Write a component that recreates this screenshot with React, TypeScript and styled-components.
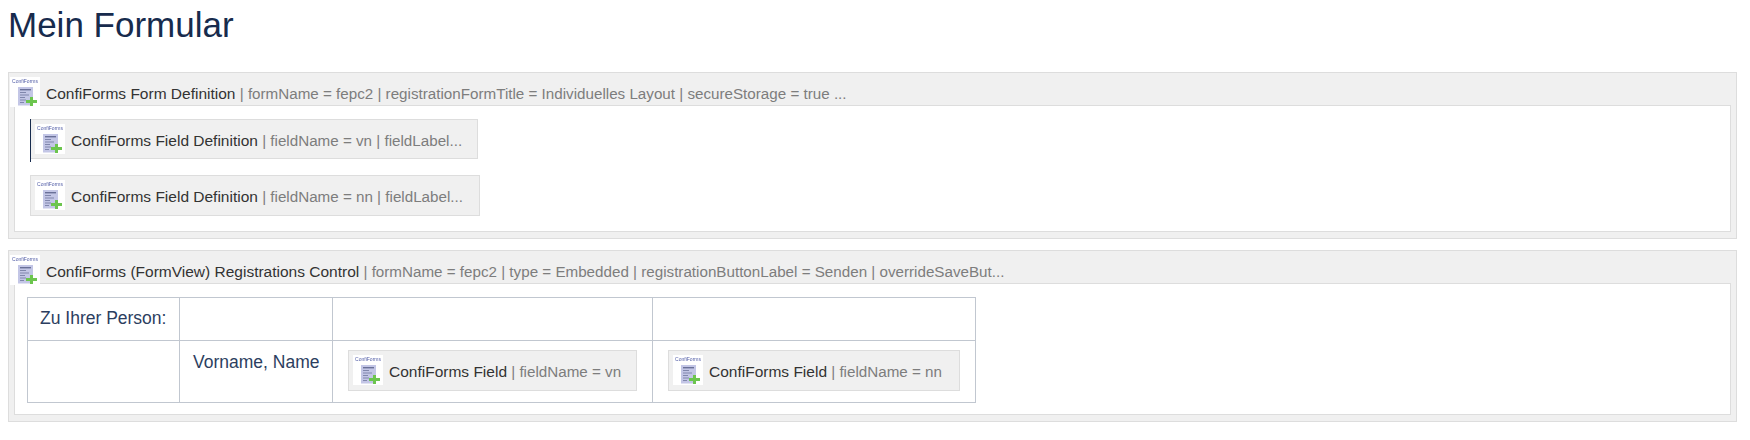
import React from 'react';
import styled, { createGlobalStyle } from 'styled-components';

const GlobalStyle = createGlobalStyle`
  html, body {
    margin: 0;
    padding: 0;
    background: #fff;
    font-family: 'Liberation Sans', Arial, sans-serif;
  }
`;

const Page = styled.div`
  padding: 0 13px 0 8px;
`;

const Title = styled.h1`
  margin: 0;
  padding: 5px 0 0 0;
  height: 72px;
  box-sizing: border-box;
  font-size: 35px;
  line-height: 40px;
  font-weight: 400;
  color: #172b4d;
`;

const Panel = styled.section<{ $height: number }>`
  box-sizing: border-box;
  height: ${(p) => p.$height}px;
  margin-bottom: 11px;
  padding: 0 5px 6px 5px;
  display: flex;
  flex-direction: column;
  background: #f0f0f0;
  border: 1px solid #dddddd;
`;

const PanelHeader = styled.div`
  display: flex;
  align-items: flex-start;
  height: 32px;
  margin-left: -4px;
  padding-top: 4px;
  box-sizing: border-box;
  flex: none;
  position: relative;
  z-index: 1;
`;

const PanelLabel = styled.div`
  margin: 7px 0 0 6px;
  line-height: 19px;
  white-space: nowrap;
`;

const PanelBody = styled.div`
  flex: 1;
  box-sizing: border-box;
  background: #fff;
  border: 1px solid #dddddd;
`;

const FieldStack = styled.div`
  display: flex;
  flex-direction: column;
  align-items: flex-start;
  gap: 16px;
  padding: 13px 0 0 15px;
`;

const MacroBox = styled.div<{ $width: number; $height: number }>`
  box-sizing: border-box;
  width: ${(p) => p.$width}px;
  height: ${(p) => p.$height}px;
  display: flex;
  align-items: flex-start;
  padding: 4px;
  background: #f0f0f0;
  border: 1px solid #dddddd;
  position: relative;
`;

const Cursor = styled.span`
  position: absolute;
  left: -1px;
  top: -1px;
  width: 1px;
  height: 43px;
  background: #172b4d;
`;

const MacroLabel = styled.div`
  margin: 7px 0 0 6px;
  line-height: 19px;
  white-space: nowrap;
`;

const Name = styled.span`
  color: #333333;
  font-size: 15.5px;
`;

const Params = styled.span`
  color: #7d7d7d;
  font-size: 15.2px;
`;

const Grid = styled.table`
  border-collapse: collapse;
  margin: 13px 0 0 12px;
  table-layout: fixed;
  width: 949px;
`;

const Cell = styled.td<{ $width?: number }>`
  box-sizing: border-box;
  border: 1px solid #c1c7d0;
  padding: 0;
  vertical-align: top;
  color: #2c3e60;
  font-size: 17.5px;
  line-height: 22px;
  ${(p) => (p.$width ? `width: ${p.$width}px;` : '')}
`;

const CellText = styled.div<{ $left: number; $top: number }>`
  padding: ${(p) => p.$top}px 0 0 ${(p) => p.$left}px;
  white-space: nowrap;
`;

const CellField = styled.div`
  padding: 9px 15px 10px;
`;

const TopRow = styled.tr`
  height: 43px;
`;

const BottomRow = styled.tr`
  height: 62px;
`;

const IconFrame = styled.svg`
  flex: none;
  display: block;
  background: #ffffff;
`;

const IconArt = styled.g`
  filter: blur(0.45px);
`;

function ConfiIcon() {
  return (
    <IconFrame width="30" height="30" viewBox="0 0 30 30">
      <IconArt>
        <text x="2" y="6" fontSize="5" fontFamily="Liberation Sans, sans-serif" fill="#5560a8" textLength="26">
          ConfiForms
        </text>
        <rect x="8" y="10" width="15" height="18.500" fill="#c3c6e6" />
        <rect x="10" y="12" width="11" height="1.400" fill="#6a7098" />
        <path d="M10 15.500h6M10 18h9M10 20.500h5M10 23h6M10 25.500h4" stroke="#8086ac" strokeWidth="1" />
        <path d="M20 20h3v3h4v3h-4v3h-3v-3h-4v-3h4z" fill="#6cc54e" />
      </IconArt>
    </IconFrame>
  );
}

type MacroProps = { width: number; height: number; name: string; params: string; cursor?: boolean };

function Macro({ width, height, name, params, cursor }: MacroProps) {
  return (
    <MacroBox $width={width} $height={height}>
      {cursor && <Cursor />}
      <ConfiIcon />
      <MacroLabel>
        <Name>{name}</Name>
        <Params> | {params}</Params>
      </MacroLabel>
    </MacroBox>
  );
}

export default function App() {
  return (
    <Page>
      <GlobalStyle />
      <Title>Mein Formular</Title>
      <Panel $height={167}>
        <PanelHeader>
          <ConfiIcon />
          <PanelLabel>
            <Name>ConfiForms Form Definition</Name>
            <Params> | formName = fepc2 | registrationFormTitle = Individuelles Layout | secureStorage = true ...</Params>
          </PanelLabel>
        </PanelHeader>
        <PanelBody>
          <FieldStack>
            <Macro width={448} height={40} cursor name="ConfiForms Field Definition" params="fieldName = vn | fieldLabel..." />
            <Macro width={450} height={41} name="ConfiForms Field Definition" params="fieldName = nn | fieldLabel..." />
          </FieldStack>
        </PanelBody>
      </Panel>
      <Panel $height={172}>
        <PanelHeader>
          <ConfiIcon />
          <PanelLabel>
            <Name>ConfiForms (FormView) Registrations Control</Name>
            <Params> | formName = fepc2 | type = Embedded | registrationButtonLabel = Senden | overrideSaveBut...</Params>
          </PanelLabel>
        </PanelHeader>
        <PanelBody>
          <Grid>
            <tbody>
              <TopRow>
                <Cell $width={152}>
                  <CellText $left={12} $top={9}>Zu Ihrer Person:</CellText>
                </Cell>
                <Cell $width={153} />
                <Cell $width={320} />
                <Cell />
              </TopRow>
              <BottomRow>
                <Cell />
                <Cell>
                  <CellText $left={13} $top={10}>Vorname, Name</CellText>
                </Cell>
                <Cell>
                  <CellField>
                    <Macro width={289} height={41} name="ConfiForms Field" params="fieldName = vn" />
                  </CellField>
                </Cell>
                <Cell>
                  <CellField>
                    <Macro width={292} height={41} name="ConfiForms Field" params="fieldName = nn" />
                  </CellField>
                </Cell>
              </BottomRow>
            </tbody>
          </Grid>
        </PanelBody>
      </Panel>
    </Page>
  );
}
